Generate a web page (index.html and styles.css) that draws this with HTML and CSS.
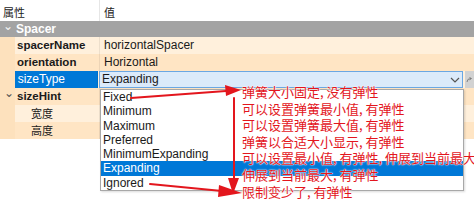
FILE: index.html
```html
<!DOCTYPE html>
<html lang="zh">
<head>
<meta charset="UTF-8">
<title>属性编辑器</title>
<link rel="stylesheet" href="styles.css">
</head>
<body>

<div class="editor">
    <div class="head">
        <div class="name-col">属性</div>
        <div class="value-col">值</div>
    </div>

    <div class="group">
        <span class="chev light">&#8964;</span>Spacer
    </div>

    <div class="row light">
        <div class="strip"></div>
        <div class="name bold">spacerName</div>
        <div class="value">horizontalSpacer</div>
    </div>
    <div class="row dark">
        <div class="strip"></div>
        <div class="name bold">orientation</div>
        <div class="value">Horizontal</div>
    </div>
    <div class="row light">
        <div class="strip"></div>
        <div class="name selected">sizeType</div>
        <div class="value editing">
            <div class="combo">
                <span>Expanding</span>
                <svg class="combo-arrow" width="10" height="6" viewBox="0 0 10 6"><path d="M1 1 L5 5 L9 1" fill="none" stroke="#555" stroke-width="1.2"/></svg>
            </div>
            <div class="reset">
                <svg width="7" height="6" viewBox="0 0 7 6"><path d="M1 5 Q1 1.5 5 1.5 M3.5 0.5 L5.5 1.5 L3.5 2.8" fill="none" stroke="#777" stroke-width="0.9"/></svg>
            </div>
        </div>
    </div>
    <div class="row dark">
        <div class="strip"></div>
        <div class="name bold"><span class="chev inner">&#8964;</span>sizeHint</div>
        <div class="value"></div>
    </div>
    <div class="row light">
        <div class="strip"></div>
        <div class="name sub">宽度</div>
        <div class="value"></div>
    </div>
    <div class="row dark">
        <div class="strip"></div>
        <div class="name sub">高度</div>
        <div class="value"></div>
    </div>
</div>

<ul class="popup">
    <li>Fixed</li>
    <li>Minimum</li>
    <li>Maximum</li>
    <li>Preferred</li>
    <li>MinimumExpanding</li>
    <li class="current">Expanding</li>
    <li>Ignored</li>
</ul>

<svg class="arrows" width="474" height="206" viewBox="0 0 474 206">
    <g fill="#e3161d" stroke="#e3161d" stroke-width="2" stroke-linecap="round">
        <line x1="131" y1="98" x2="226" y2="91"/>
        <polygon stroke="none" points="241,90 225,85 226,96"/>
        <line x1="234" y1="98" x2="234" y2="180"/>
        <polygon stroke="none" points="233,194 228,178 239,178"/>
        <line x1="150" y1="184" x2="222" y2="191"/>
        <polygon stroke="none" points="242,193 219,185 218,197"/>
    </g>
</svg>

<div class="notes">
    <div>弹簧大小固定, 没有弹性</div>
    <div>可以设置弹簧最小值, 有弹性</div>
    <div>可以设置弹簧最大值, 有弹性</div>
    <div>弹簧以合适大小显示, 有弹性</div>
    <div>可以设置最小值, 有弹性, 伸展到当前最大</div>
    <div>伸展到当前最大, 有弹性</div>
    <div>限制变少了, 有弹性</div>
</div>

</body>
</html>
```

FILE: styles.css
```css
body {
    margin: 0;
    width: 474px;
    height: 206px;
    overflow: hidden;
    position: relative;
    background: #fff;
    font-family: "Liberation Sans", "Noto Sans CJK SC", sans-serif;
    font-size: 12px;
    color: #1a1a1a;
}
.editor {
    display: flex;
    flex-direction: column;
}
.head {
    display: flex;
    height: 21px;
    align-items: center;
    font-family: "Noto Sans CJK SC", sans-serif;
    font-size: 11px;
    color: #222;
}
.head .name-col {
    width: 96px;
    padding-left: 3px;
    border-right: 1px solid #e6e6e6;
    height: 100%;
    line-height: 24px;
}
.head .value-col {
    padding-left: 4px;
    line-height: 24px;
    height: 100%;
}
.group {
    height: 16px;
    line-height: 16px;
    background: #a3a3a3;
    color: #fff;
    font-weight: bold;
    padding-left: 3px;
}
.chev {
    display: inline-block;
    width: 13px;
    font-family: "DejaVu Sans", sans-serif;
    font-size: 12px;
    font-weight: normal;
    line-height: 10px;
    vertical-align: 3px;
}
.chev.light {
    color: #f4f4f4;
}
.chev.inner {
    color: #555;
    margin-left: -13px;
}
.row {
    display: flex;
    height: 17px;
    line-height: 17px;
}
.row.light {
    background: #fff0dc;
}
.row.dark {
    background: #ffe5c4;
}
.strip {
    width: 15px;
    background: #fde1bd;
}
.name {
    width: 82px;
    padding-left: 2px;
    border-right: 1px solid rgba(0, 0, 0, 0.07);
    white-space: nowrap;
}
.name.bold {
    font-weight: bold;
    font-size: 11.5px;
}
.name.selected {
    background: #0078d7;
    color: #fff;
    padding-left: 3px;
    width: 81px;
}
.name.sub {
    padding-left: 16px;
    width: 68px;
    font-family: "Noto Sans CJK SC", sans-serif;
    font-size: 11px;
}
.value {
    flex: 1;
    display: flex;
    padding-left: 4px;
    white-space: nowrap;
}
.value.editing {
    padding-left: 1px;
}
.combo {
    width: 360px;
    height: 15px;
    border: 1px solid #6aa7e3;
    background: #dbeafa;
    display: flex;
    align-items: center;
    justify-content: space-between;
    padding-left: 2px;
    margin-right: 2px;
}
.combo-arrow {
    margin-right: 2px;
}
.reset {
    width: 9px;
    background: #d2d2d2;
    display: flex;
    align-items: center;
    justify-content: center;
}
.popup {
    position: absolute;
    left: 100px;
    top: 89px;
    width: 362px;
    height: 100px;
    margin: 0;
    padding: 0;
    list-style: none;
    background: #fff;
    border: 1px solid #a8a8a8;
    box-shadow: 1px 1px 2px rgba(0, 0, 0, 0.15);
}
.popup li {
    height: 14.3px;
    line-height: 14.3px;
    padding-left: 2px;
    color: #1a1a1a;
}
.popup li.current {
    background: #0078d7;
    color: #fff;
}
.arrows {
    position: absolute;
    left: 0;
    top: 0;
}
.notes {
    position: absolute;
    left: 242px;
    top: 84px;
    font-family: "Noto Sans CJK SC", sans-serif;
    font-size: 13px;
    line-height: 16.6px;
    color: #e3161d;
    white-space: nowrap;
    text-shadow: 0 0 1px #fff, 0 0 1px #fff, 0 0 2px #fff;
}
```
